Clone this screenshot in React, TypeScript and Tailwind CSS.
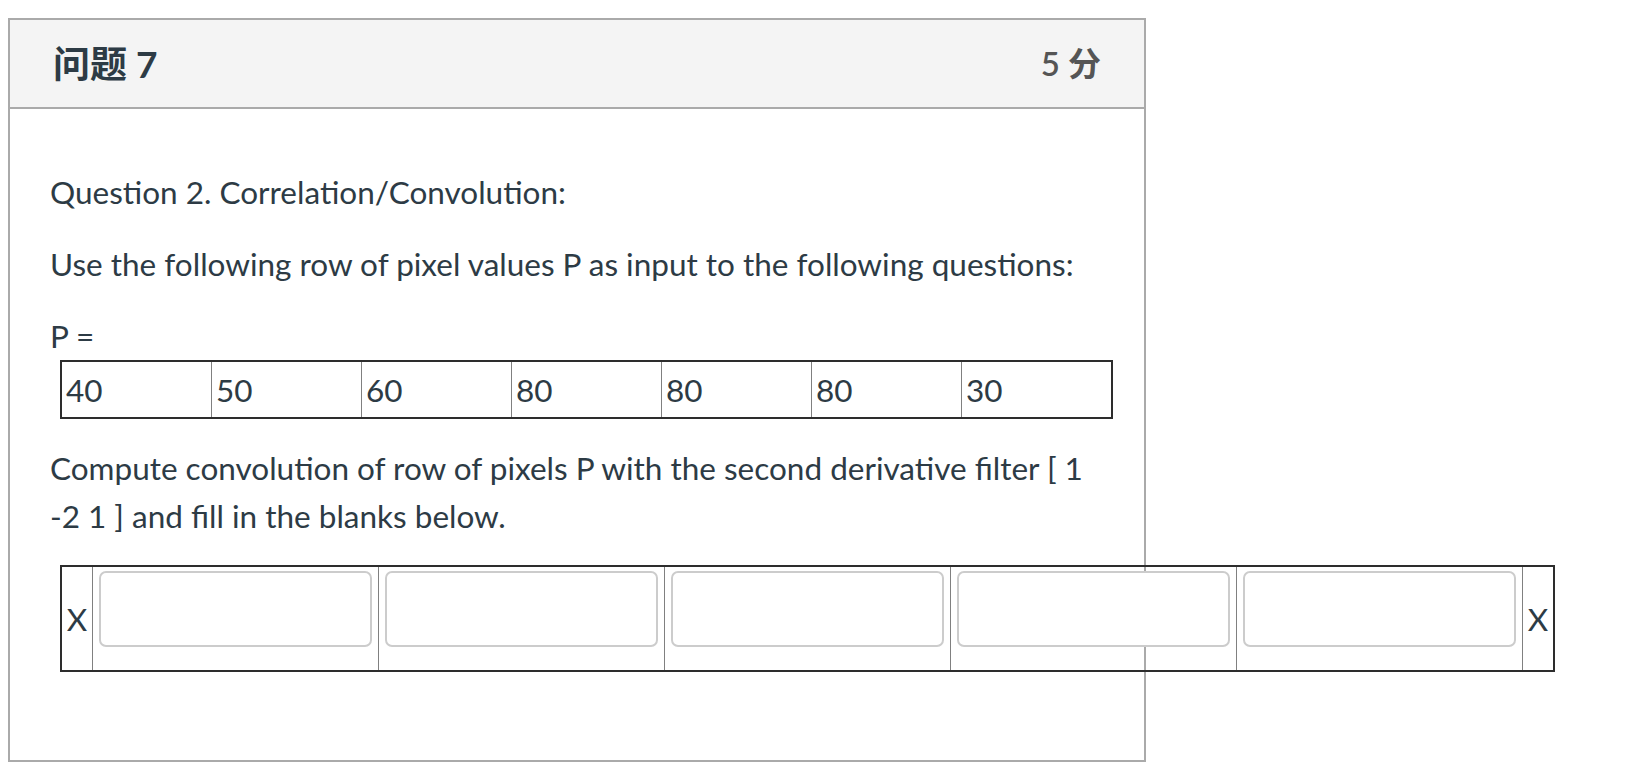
export default function App() {
  const pixels = ["40", "50", "60", "80", "80", "80", "30"];
  const blanks = [0, 1, 2, 3, 4];

  return (
    <div className="min-h-[772px] bg-white pt-[18px] pl-[8px] font-['Lato','Noto_Sans_CJK_SC',sans-serif] text-[#2d3b45]">
      <div className="w-[1138px] border-2 border-[#aaaaaa]">
        {/* header */}
        <div className="flex h-[89px] items-center justify-between border-b-2 border-[#aaaaaa] bg-[#f4f4f4] px-[43px]">
          <h2 className="text-[37px] font-bold leading-none">问题 7</h2>
          <span className="text-[33px] font-semibold leading-none text-[#555555]">5 分</span>
        </div>

        {/* body */}
        <div className="px-[40px] pt-[59px] pb-[88px] text-[31.5px] leading-[48px]">
          <p className="mb-[24px]">Question 2. Correlation/Convolution:</p>
          <p className="mb-[24px]">Use the following row of pixel values P as input to the following questions:</p>
          <p>P =</p>

          <div className="ml-[10px] flex h-[59px] w-[1053px] border-2 border-[#2d2d2d]">
            {pixels.map((v, i) => (
              <div
                key={i}
                className={`flex flex-1 items-center pl-[4px] ${i > 0 ? "border-l border-[#808080]" : ""}`}
              >
                {v}
              </div>
            ))}
          </div>

          <p className="mt-[25px]">
            Compute convolution of row of pixels P with the second derivative filter [ 1
            <br />
            -2 1 ] and fill in the blanks below.
          </p>

          <div className="mt-[25px] ml-[10px] flex h-[107px] w-[1495px] border-2 border-[#2d2d2d]">
            <div className="flex w-[30px] shrink-0 items-center justify-center">X</div>
            {blanks.map((b) => (
              <div key={b} className="w-[286px] shrink-0 border-l border-[#808080] px-[6px] pt-[4px]">
                <input
                  type="text"
                  className="block h-[76px] w-full rounded-[7px] border-2 border-[#cccccc] bg-white outline-none"
                />
              </div>
            ))}
            <div className="flex flex-1 items-center justify-center border-l border-[#808080]">X</div>
          </div>
        </div>
      </div>
    </div>
  );
}
